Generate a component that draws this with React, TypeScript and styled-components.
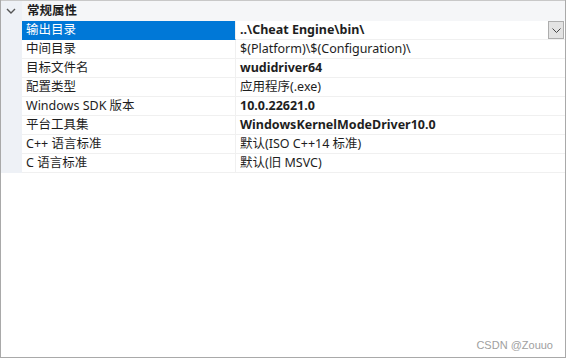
import React from "react";
import styled, { createGlobalStyle } from "styled-components";

type Prop = { name: string; value: string; bold?: boolean; selected?: boolean };

const props: Prop[] = [
  { name: "输出目录", value: "..\\Cheat Engine\\bin\\", bold: true, selected: true },
  { name: "中间目录", value: "$(Platform)\\$(Configuration)\\" },
  { name: "目标文件名", value: "wudidriver64", bold: true },
  { name: "配置类型", value: "应用程序(.exe)" },
  { name: "Windows SDK 版本", value: "10.0.22621.0", bold: true },
  { name: "平台工具集", value: "WindowsKernelModeDriver10.0", bold: true },
  { name: "C++ 语言标准", value: "默认(ISO C++14 标准)" },
  { name: "C 语言标准", value: "默认(旧 MSVC)" },
];

const App = () => {
  return (
    <>
      <Global />
      <Frame>
        {/* 分类标题 */}
        <Category>
          <Gutter>
            <svg width="10" height="6" viewBox="0 0 10 6">
              <path d="M1 1 L5 5 L9 1" fill="none" stroke="#555" strokeWidth="1.4" />
            </svg>
          </Gutter>
          <CategoryTitle>常规属性</CategoryTitle>
        </Category>

        {/* 属性行 */}
        {props.map((p) => (
          <Row key={p.name}>
            <Gutter />
            <Name $selected={p.selected}>{p.name}</Name>
            <Value $bold={p.bold}>
              <span>{p.value}</span>
              {p.selected && (
                <DropButton>
                  <svg width="9" height="5" viewBox="0 0 9 5">
                    <path d="M0.5 0.5 L4.5 4.5 L8.5 0.5" fill="none" stroke="#444" strokeWidth="1" />
                  </svg>
                </DropButton>
              )}
            </Value>
          </Row>
        ))}

        <Empty />
        <Watermark>CSDN @Zouuo</Watermark>
      </Frame>
    </>
  );
};

const Global = createGlobalStyle`
  html, body {
    margin: 0;
    padding: 0;
    background: #fff;
  }
  * { box-sizing: border-box; }
`;

const Frame = styled.div`
  width: 566px;
  height: 358px;
  border: 1px solid #a9a9a9;
  border-top: none;
  display: flex;
  flex-direction: column;
  font-family: "Noto Sans", "Noto Sans CJK SC", sans-serif;
  font-size: 12.5px;
  color: #1e1e1e;
  position: relative;
`;

const Category = styled.div`
  display: flex;
  height: 21px;
  background: #f5f6f8;
  border-top: 1px solid #c8c8c8;
`;

const Gutter = styled.div`
  width: 21px;
  flex: none;
  background: #eef1f6;
  display: flex;
  align-items: center;
  justify-content: center;
  padding-right: 2px;
`;

const CategoryTitle = styled.div`
  font-weight: bold;
  padding-left: 5px;
  line-height: 20px;
`;

const Row = styled.div`
  display: flex;
  height: 19px;
  line-height: 18px;
`;

const Name = styled.div<{ $selected?: boolean }>`
  width: 214px;
  flex: none;
  padding-left: 4px;
  border-bottom: 1px solid #f0f0f0;
  border-right: 1px solid #f0f0f0;
  background: ${(p) => (p.$selected ? "#0078d7" : "#fff")};
  color: ${(p) => (p.$selected ? "#fff" : "#1e1e1e")};
  border-bottom-color: ${(p) => (p.$selected ? "#0078d7" : "#f0f0f0")};
  white-space: nowrap;
`;

const Value = styled.div<{ $bold?: boolean }>`
  flex: 1;
  display: flex;
  justify-content: space-between;
  padding-left: 4px;
  padding-right: 1px;
  border-bottom: 1px solid #f0f0f0;
  font-weight: ${(p) => (p.$bold ? "bold" : "normal")};
  white-space: nowrap;
`;

const DropButton = styled.div`
  width: 16px;
  height: 18px;
  background: #e3e3e3;
  border: 1px solid #adadad;
  display: flex;
  align-items: center;
  justify-content: center;
`;

const Empty = styled.div`
  flex: 1;
`;

const Watermark = styled.div`
  position: absolute;
  right: 12px;
  bottom: 6px;
  font-family: "Liberation Sans", Arial, sans-serif;
  font-size: 11px;
  color: #a0a0a0;
`;

export default App;
